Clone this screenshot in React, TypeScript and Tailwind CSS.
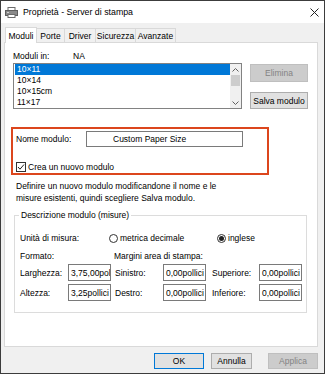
import React from "react";

const items = ["10×11", "10×14", "10×15cm", "11×17"];

function PrinterIcon() {
  return (
    <svg width="13" height="11" viewBox="0 0 13 11" className="shrink-0">
      <rect x="3" y="0.5" width="7" height="3" fill="#fff" stroke="#6b6b6b" />
      <rect x="0.5" y="3.5" width="12" height="5" fill="#8a8a8a" stroke="#5e5e5e" />
      <rect x="3" y="7.5" width="7" height="3" fill="#fff" stroke="#6b6b6b" />
      <rect x="2" y="5" width="2" height="1" fill="#d0d0d0" />
    </svg>
  );
}

function CloseIcon() {
  return (
    <svg width="9" height="9" viewBox="0 0 9 9" className="ml-auto shrink-0">
      <path d="M0.5 0.5 L8.5 8.5 M8.5 0.5 L0.5 8.5" stroke="#222" strokeWidth="1" />
    </svg>
  );
}

function Checkbox() {
  return (
    <div className="w-[10px] h-[10px] border border-[#333] bg-white flex items-center justify-center shrink-0">
      <svg width="8" height="8" viewBox="0 0 8 8">
        <path d="M1 4 L3 6.2 L7 1.5" stroke="#222" strokeWidth="1" fill="none" />
      </svg>
    </div>
  );
}

function Radio({ checked }: { checked?: boolean }) {
  return (
    <div className="w-[9px] h-[9px] rounded-full border border-[#333] bg-white flex items-center justify-center shrink-0">
      {checked && <div className="w-[5px] h-[5px] rounded-full bg-[#222]" />}
    </div>
  );
}

function Field({ value }: { value: string }) {
  return (
    <div className="w-[43px] h-[17px] border border-[#7a7a7a] bg-white flex items-center pl-[2px] overflow-hidden whitespace-nowrap">
      {value}
    </div>
  );
}

function Tab({ label, w, active }: { label: string; w: string; active?: boolean }) {
  return active ? (
    <div className={`${w} h-[16px] bg-white border border-b-0 border-[#d9d9d9] flex items-center justify-center -mb-px relative z-10`}>
      {label}
    </div>
  ) : (
    <div className={`${w} h-[14px] bg-[#f0f0f0] border border-b-0 border-l-0 border-[#d9d9d9] flex items-center justify-center`}>
      {label}
    </div>
  );
}

export default function App() {
  return (
    <div className="w-[325px] h-[374px] border border-[#3c3c3c] bg-[#f0f0f0] flex flex-col text-[8.5px] leading-[12px] text-black [font-family:'Liberation_Sans',Arial,sans-serif] overflow-hidden">
      {/* Title bar */}
      <div className="h-[22px] bg-white flex items-center pl-[4px] pr-[5px] shrink-0">
        <PrinterIcon />
        <span className="ml-[5px] text-[8.8px]">Proprietà - Server di stampa</span>
        <CloseIcon />
      </div>

      <div className="flex-1 pl-[3px] pt-[4px] flex flex-col">
        {/* Tabs */}
        <div className="flex items-end h-[15px] pl-[1px]">
          <Tab label="Moduli" w="w-[32px]" active />
          <Tab label="Porte" w="w-[28px]" />
          <Tab label="Driver" w="w-[31px]" />
          <Tab label="Sicurezza" w="w-[40px]" />
          <Tab label="Avanzate" w="w-[40px]" />
        </div>

        {/* Panel */}
        <div className="w-[314px] h-[305px] bg-white border border-[#d9d9d9] pl-[8px] pt-[7px] flex flex-col">
          <div className="flex h-[12px] items-center">
            <span className="w-[60px]">Moduli in:</span>
            <span>NA</span>
          </div>

          <div className="flex mt-[1px]">
            {/* List box */}
            <div className="w-[229px] h-[46px] border border-[#828282] flex">
              <div className="flex-1 pl-[1px]">
                {items.map((it, i) => (
                  <div
                    key={it}
                    className={`h-[11px] leading-[11px] pl-[2px] ${i === 0 ? "bg-[#0078d7] text-white" : ""}`}
                  >
                    {it}
                  </div>
                ))}
              </div>
              <div className="w-[11px] bg-[#f0f0f0] flex flex-col items-center">
                <div className="h-[11px] flex items-center justify-center">
                  <svg width="7" height="4" viewBox="0 0 7 4">
                    <path d="M0.5 3.5 L3.5 0.5 L6.5 3.5" stroke="#606060" fill="none" />
                  </svg>
                </div>
                <div className="w-[9px] h-[11px] bg-[#cdcdcd]" />
                <div className="flex-1" />
                <div className="h-[11px] flex items-center justify-center">
                  <svg width="7" height="4" viewBox="0 0 7 4">
                    <path d="M0.5 0.5 L3.5 3.5 L6.5 0.5" stroke="#606060" fill="none" />
                  </svg>
                </div>
              </div>
            </div>

            <div className="ml-[8px] flex flex-col pt-[1px]">
              <div className="w-[58px] h-[18px] bg-[#cccccc] border border-[#bfbfbf] text-[#838383] flex items-center justify-center">
                Elimina
              </div>
              <div className="w-[58px] h-[17px] mt-[10px] bg-[#e1e1e1] border border-[#adadad] flex items-center justify-center">
                Salva modulo
              </div>
            </div>
          </div>

          {/* Highlighted box */}
          <div className="w-[258px] h-[48px] -ml-[2px] mt-[18px] border-2 border-[#dc461d] pl-[3px] pt-[2px] flex flex-col">
            <div className="flex items-center h-[16px]">
              <span className="w-[70px]">Nome modulo:</span>
              <div className="w-[157px] h-[16px] border border-[#7a7a7a] flex items-center pl-[26px]">
                Custom Paper Size
              </div>
            </div>
            <div className="flex items-center h-[12px] mt-[14px]">
              <Checkbox />
              <span className="ml-[2px]">Crea un nuovo modulo</span>
            </div>
          </div>

          <p className="mt-[5px] pl-[3px]">
            Definire un nuovo modulo modificandone il nome e le
            <br />
            misure esistenti, quindi scegliere Salva modulo.
          </p>

          {/* Group box */}
          <div className="relative w-[293px] h-[98px] ml-[1px] mt-[11px] border border-[#dcdcdc] pl-[5px] pt-[16px]">
            <span className="absolute -top-[7px] left-[4px] bg-white px-[2px]">
              Descrizione modulo (misure)
            </span>
            <div className="flex items-center h-[12px]">
              <span className="w-[89px]">Unità di misura:</span>
              <Radio />
              <span className="ml-[2px] w-[97px]">metrica decimale</span>
              <Radio checked />
              <span className="ml-[2px]">inglese</span>
            </div>
            <div className="flex items-center h-[12px] mt-[6px]">
              <span className="w-[94px]">Formato:</span>
              <span>Margini area di stampa:</span>
            </div>
            <div className="flex items-center mt-[2px]">
              <span className="w-[48px]">Larghezza:</span>
              <Field value="3,75,00pol" />
              <span className="w-[48px] ml-[4px]">Sinistro:</span>
              <Field value="0,00pollici" />
              <span className="w-[47px] ml-[6px]">Superiore:</span>
              <Field value="0,00pollici" />
            </div>
            <div className="flex items-center mt-[3px]">
              <span className="w-[48px]">Altezza:</span>
              <Field value="3,25pollici" />
              <span className="w-[48px] ml-[4px]">Destro:</span>
              <Field value="0,00pollici" />
              <span className="w-[47px] ml-[6px]">Inferiore:</span>
              <Field value="0,00pollici" />
            </div>
          </div>
        </div>

        {/* Bottom buttons */}
        <div className="flex mt-[6px] pl-[150px]">
          <div className="w-[50px] h-[16px] bg-[#e1e1e1] border border-[#0078d7] flex items-center justify-center">
            OK
          </div>
          <div className="w-[41px] h-[16px] ml-[7px] bg-[#e1e1e1] border border-[#adadad] flex items-center justify-center">
            Annulla
          </div>
          <div className="w-[50px] h-[16px] ml-[16px] bg-[#cccccc] border border-[#bfbfbf] text-[#838383] flex items-center justify-center">
            Applica
          </div>
        </div>
      </div>
    </div>
  );
}
